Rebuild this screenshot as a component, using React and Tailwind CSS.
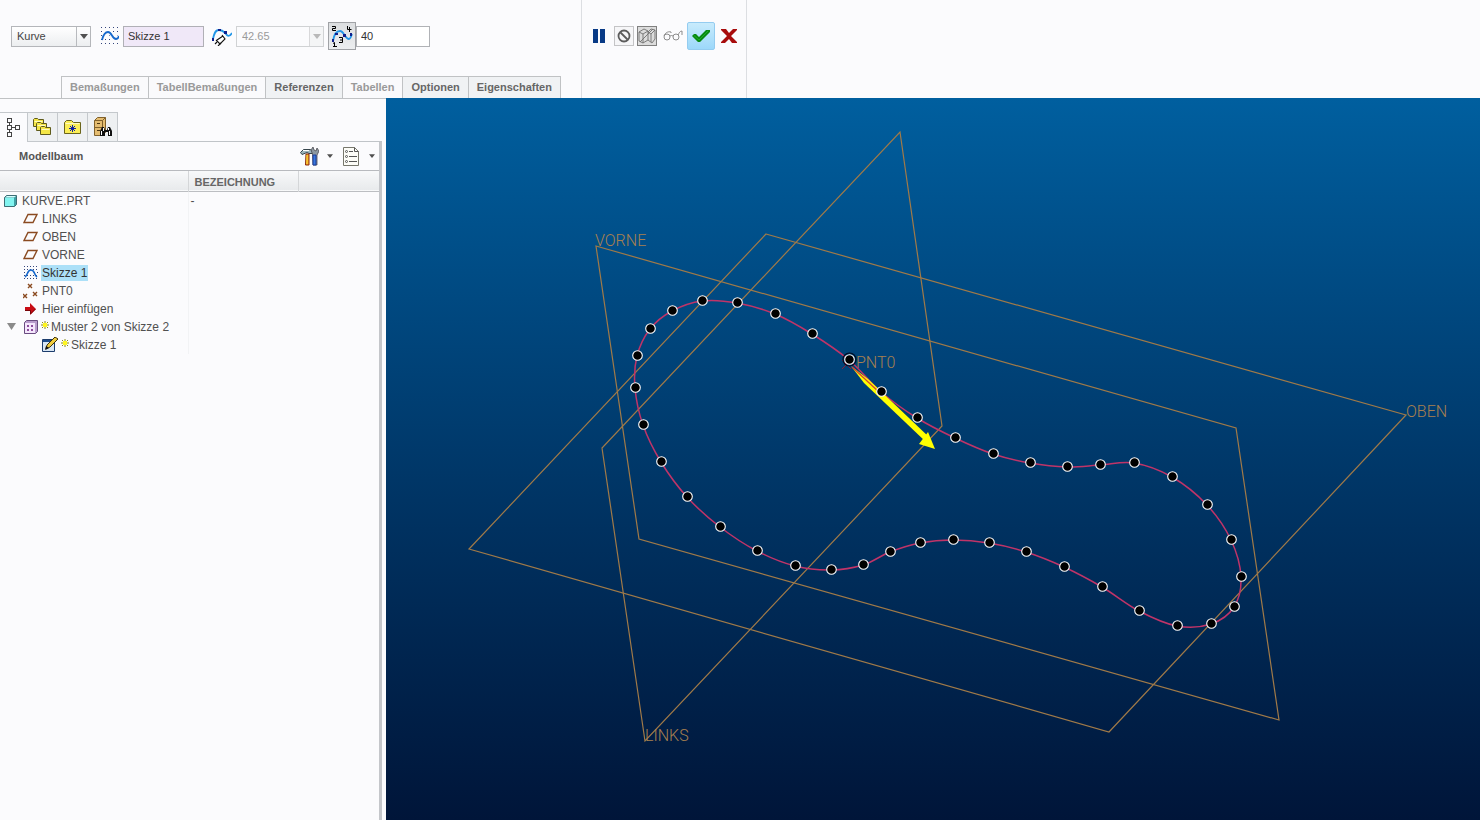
import { useState } from "react";
import clsx from "clsx";

const TABS = [
  { label: "Bemaßungen", disabled: true },
  { label: "TabellBemaßungen", disabled: true },
  { label: "Referenzen" },
  { label: "Tabellen", disabled: true },
  { label: "Optionen" },
  { label: "Eigenschaften" },
];

const POINTS = [
  [849, 359], [881, 391], [917, 417], [955, 437], [993, 453], [1030, 462], [1067, 466], [1100, 464],
  [1134, 462], [1172, 476], [1207, 504], [1231, 539], [1241, 576], [1234, 606], [1211, 623], [1177, 625],
  [1139, 610], [1102, 586], [1064, 566], [1026, 551], [989, 542], [953, 539], [920, 542], [890, 551],
  [863, 564], [831, 569], [795, 565], [757, 550], [720, 526], [687, 496], [661, 461], [643, 424],
  [635, 387], [637, 355], [650, 328], [672, 310], [702, 300], [737, 302], [775, 313], [812, 333],
];

const PLANES = [
  "900,132 942,426 645,741 602,448",
  "596,246 1236,428 1279,720 639,539",
  "766,234 1406,415 1109,732 469,549",
];

// closed Catmull-Rom spline through all points
function closedCurve(pts) {
  const n = pts.length;
  let d = `M${pts[0][0]} ${pts[0][1]}`;
  for (let i = 0; i < n; i++) {
    const p0 = pts[(i - 1 + n) % n];
    const p1 = pts[i];
    const p2 = pts[(i + 1) % n];
    const p3 = pts[(i + 2) % n];
    d += `C${p1[0] + (p2[0] - p0[0]) / 6} ${p1[1] + (p2[1] - p0[1]) / 6} ${p2[0] - (p3[0] - p1[0]) / 6} ${p2[1] - (p3[1] - p1[1]) / 6} ${p2[0]} ${p2[1]}`;
  }
  return d + "Z";
}

const CURVE = closedCurve(POINTS.map(([x, y]) => [x, y + 1]));

/* ---------- icons ---------- */

function SketchIcon() {
  return (
    <svg viewBox="0 0 18 18" className="size-[18px] shrink-0" fill="none">
      <path
        d="M0 .5h18M0 4.500h18M0 8.500h18M0 12.500h18M0 16.500h18"
        stroke="#34457c"
        strokeDasharray="1 3"
        shapeRendering="crispEdges"
      />
      <path d="M2 12C3 8 5 5 7 5c4 0 4 7 8 7q2 0 3-3" stroke="#fbfbfd" strokeWidth="4" />
      <path d="M1 13C2 9 4 5 7 5c4 0 4 7 8 7q2 0 3-3" stroke="#1668cc" strokeWidth="1.8" />
    </svg>
  );
}

function SketchNodeIcon() {
  return (
    <svg viewBox="0 0 14 14" className="size-[14px] shrink-0" fill="none">
      <path
        d="M0 .5h14M0 3.500h14M0 6.500h4M10 6.500h4M0 9.500h14M0 12.500h14"
        stroke="#34457c"
        strokeDasharray="1 2"
        shapeRendering="crispEdges"
      />
      <path d="M1 11C4 9 3 4 7 4s3 5 6 7" stroke="#1668cc" strokeWidth="1.6" />
    </svg>
  );
}

function SpacingIcon() {
  return (
    <svg viewBox="0 0 20 19" className="h-[19px] w-5 shrink-0" fill="none">
      <path d="M1 12C2 7 3 3 7 3c4 0 5 2 7 4 2 3 4 2 6-1" stroke="#2196e8" strokeWidth="1.8" />
      <path d="M0 11h2v3H0zM6 2h3v2H6zM12 4h3v3h-3z" fill="#10208c" />
      <path d="M4 13l4 4 5-5-3-4" fill="#fff" stroke="#111" strokeWidth="1.1" />
      <path d="M3 17l2-2M5 13l6-4M6 19l3-3" stroke="#111" strokeWidth="1.1" />
    </svg>
  );
}

function CountIcon() {
  return (
    <svg viewBox="0 0 22 22" className="size-[22px]" fill="none">
      <path d="M2 16C3 10 5 6 9 6c4 0 5 8 9 8 1 0 2-2 3-5" stroke="#2196e8" strokeWidth="1.8" />
      <path d="M1 14h2v3H1zM4 8h3v2H4zM12 9h3v3h-3zM19 8h2v3h-2z" fill="#10208c" />
      <g stroke="#000">
        <path d="M1 1.500h3.500v2h-3v2H5" />
        <path d="M2 18.500l1.500-1V22M2 21.500h4" />
        <path d="M8 12.500h3.500v5H8M9 15h2.500" />
        <path d="M16.500 1v3.500h4M18.500 2v5" />
      </g>
    </svg>
  );
}

function PauseIcon() {
  return (
    <svg viewBox="0 0 12 14" className="h-[14px] w-3" fill="#083a86">
      <path d="M0 0h5v14H0zM7 0h5v14H7z" />
    </svg>
  );
}

function NoEntryIcon() {
  return (
    <svg viewBox="0 0 14 14" className="size-[14px]" fill="none" stroke="#5c5c5c" strokeWidth="1.8">
      <circle cx="7" cy="7" r="5.500" />
      <path d="M3.500 3.500l7 7" />
    </svg>
  );
}

function PreviewIcon() {
  return (
    <svg viewBox="0 0 18 18" className="size-[18px]" fill="none" stroke="#707070" strokeWidth=".9">
      <path d="M1 5l5-3 4 2v9l-5 3-4-2zM1 5l4 2 5-3M5 7v9" />
      <path d="M10 5l3-3 4 1v9l-3 4-4-3M17 3l-4 4v8M10 5l3 2M2 15L15 2" />
    </svg>
  );
}

function GlassesIcon() {
  return (
    <svg viewBox="0 0 20 12" className="h-3 w-5" fill="none" stroke="#8c8c8c">
      <circle cx="4" cy="7" r="3" />
      <circle cx="13" cy="7" r="3" />
      <path d="M1 6C2 3 5 1 8 2v1M7 6q1.500-1 3 0M15 5c1-2 2-4 4-4v4" />
    </svg>
  );
}

function CheckIcon() {
  return (
    <svg viewBox="0 0 18 14" className="h-[14px] w-[18px]">
      <path d="M0 7l2-2h2l3 3 7-7h4v2L8 13H6z" fill="#078a10" />
      <path d="M2 6.500l5 4.500 9-9" stroke="#1fac28" fill="none" />
    </svg>
  );
}

function CancelIcon() {
  return (
    <svg viewBox="0 0 16 14" className="h-[14px] w-4">
      <path d="M0 0h5l3 4 4-4h4v1l-6 6 6 6v1h-5l-3-4-4 4H0v-1l6-6-6-6z" fill="#a80c0c" />
    </svg>
  );
}

function TreeIcon() {
  return (
    <svg viewBox="0 0 14 20" className="mb-0.5 h-5 w-[14px]" fill="none" stroke="#444" shapeRendering="crispEdges">
      <path d="M1.500 1.500h4v4h-4zM1.500 8.500h4v4h-4zM1.500 15.500h4v4h-4zM9.500 8.500h4v4h-4zM3.500 5.500v3M3.500 12.500v3M5.500 10.500h4" />
    </svg>
  );
}

function FolderShape({ x, y }) {
  return (
    <g transform={`translate(${x} ${y})`}>
      <path d="M.5 1.500l1-1h3l1 1h5v7H.5z" fill="#f4e646" stroke="#5e5a1c" />
      <path d="M1.500 3.500h8" stroke="#fffbc0" />
    </g>
  );
}

function FoldersIcon() {
  return (
    <svg viewBox="0 0 19 20" className="h-5 w-[19px]">
      <FolderShape x={0} y={1} />
      <FolderShape x={3} y={5} />
      <FolderShape x={7} y={9} />
    </svg>
  );
}

function FavoritesIcon() {
  return (
    <svg viewBox="0 0 18 16" className="h-4 w-[18px]">
      <path d="M.5 3.500l2-2h5l2 2h7v11H.5z" fill="#fbee58" stroke="#6a641c" />
      <path d="M1.500 4.500h14" stroke="#fffcc8" />
      <path d="M8.500 6v7M5 9.500h7M6 7l5 5M11 7l-5 5" stroke="#1020a0" />
    </svg>
  );
}

function SearchIcon() {
  return (
    <svg viewBox="0 0 20 20" className="size-5">
      <path d="M1.500 3.500l3-3h8v15l-3 3h-8z" fill="#e4bc70" stroke="#80602a" />
      <path d="M1.500 3.500h8l3-3M9.500 3.500v15M1.500 10.500h8" stroke="#80602a" fill="none" />
      <path d="M4 6.500h3M4 13.500h3" stroke="#4c3510" />
      <path d="M7 19v-5l2-4h2l1 3h2l1-3h2l2 4v5h-4v-4h-3v4z" fill="#111" />
      <path d="M8.500 14v4M10.500 11v3M16.500 14v4M15.500 11v2" stroke="#fff" />
    </svg>
  );
}

function ToolsIcon() {
  return (
    <svg viewBox="0 0 19 20" className="h-5 w-[19px]">
      <path d="M.5 6.500l3-3h7l2 2v2H9l-2-1-5 2z" fill="#9cb4bc" stroke="#36444c" />
      <path d="M3 4.500h6" stroke="#fff" />
      <path d="M6 8h3v11H5.500z" fill="#f0a020" stroke="#8c2c10" />
      <path d="M7 9v9" stroke="#ffe440" />
      <path d="M12.500 8L11 4l2-3 1 3 2 1 1-3 2 3-2 4v10h-4z" fill="#8c98a0" stroke="#4a4a50" strokeWidth=".8" />
      <path d="M13 9h3v10h-3z" fill="#3878e0" stroke="#1c3c98" />
    </svg>
  );
}

function ListIcon() {
  return (
    <svg viewBox="0 0 16 19" className="h-[19px] w-4" fill="none" stroke="#555">
      <path d="M.5.5h11l4 4v14H.5z" fill="#fdfdf8" stroke="#77776c" />
      <path d="M11.500.5v4h4" />
      <circle cx="3.500" cy="4.500" r="1" />
      <circle cx="3.500" cy="9.500" r="1" />
      <circle cx="3.500" cy="14.500" r="1" />
      <path d="M6 4.500h4M6 9.500h8M6 14.500h8" />
    </svg>
  );
}

function Caret({ small }) {
  return (
    <svg viewBox="0 0 8 5" className={small ? "h-1 w-1.5" : "h-[5px] w-2"} fill="currentColor">
      <path d="M0 0h8L4 5z" />
    </svg>
  );
}

function PartIcon() {
  return (
    <svg viewBox="0 0 14 14" className="size-[14px] shrink-0">
      <path d="M.5 3.500l2-2h10v9l-2 2H.5z" fill="#3fa0a4" stroke="#3d6d74" />
      <path d="M1 4h9v8H1z" fill="#82f4f0" />
      <path d="M1 3.500l2-1.500h9l-2 1.500z" fill="#d4ffff" />
    </svg>
  );
}

function PlaneIcon() {
  return (
    <svg viewBox="0 0 15 11" className="h-[11px] w-[15px] shrink-0" fill="none" stroke="#8a4a20" strokeWidth="1.4">
      <path d="M5 1.500h9l-4 8H1z" />
    </svg>
  );
}

function PointsIcon() {
  return (
    <svg viewBox="0 0 15 16" className="h-4 w-[15px] shrink-0" stroke="#8a4a20" strokeWidth="1.4">
      <path d="M5 1l4 4M9 1L5 5M0 11l4 4M4 11l-4 4M10 9l4 4M14 9l-4 4" />
    </svg>
  );
}

function InsertIcon() {
  return (
    <svg viewBox="0 0 11 12" className="mx-0.5 h-3 w-[11px] shrink-0">
      <path d="M0 4h5V0l6 6-6 6V8H0z" fill="#c80c14" />
      <path d="M0 7.500h5.500V11l5-5" stroke="#780408" fill="none" />
    </svg>
  );
}

function PatternIcon() {
  return (
    <svg viewBox="0 0 14 14" className="size-[14px] shrink-0">
      <path d="M.5 2.500l2-2h11v11l-2 2H.5z" fill="#b89ccc" stroke="#694c80" />
      <path d="M1 3h10v10H1z" fill="#f4e6fc" />
      <path d="M3 5h2v2H3zM7 5h2v2H7zM3 9h2v2H3zM7 9h2v2H7z" fill="#8c4c9c" />
    </svg>
  );
}

function EditSketchIcon() {
  return (
    <svg viewBox="0 0 16 15" className="h-[15px] w-4 shrink-0">
      <path d="M.5 2.500h12v12H.5z" fill="#d8e6f4" stroke="#1c3c6c" />
      <path d="M1 3h11v2H1z" fill="#1c4c8c" />
      <path d="M4 12l1-4 8-8 3 2-8 8z" fill="#f0cc3c" stroke="#3c300c" />
      <path d="M3 13l1-4 3 2z" fill="#111" />
    </svg>
  );
}

function NewMark() {
  return (
    <svg viewBox="0 0 8 8" className="mb-1 size-2 shrink-0">
      <path d="M4 0v8M0 4h8M1 1l6 6M7 1L1 7" stroke="#8c8c14" />
      <path d="M2 2h4v4H2z" fill="#fff620" />
    </svg>
  );
}

/* ---------- toolbar ---------- */

function Combo({ label, value, disabled, className }) {
  return (
    <div className={clsx("relative flex", className)}>
      <select
        aria-label={label}
        disabled={disabled}
        defaultValue={value}
        className={clsx(
          "h-[21px] w-full appearance-none border pl-[5px] text-[11px] leading-4 outline-none",
          disabled
            ? "border-[#d0d2d4] bg-[#fbfbfd] text-[#9a9a9a] opacity-100"
            : "border-[#b4b6ba] bg-linear-to-b from-white to-[#eceef0] text-[#444]"
        )}
      >
        <option>{value}</option>
      </select>
      <span
        className={clsx(
          "pointer-events-none absolute inset-y-px right-px flex w-[14px] items-center justify-center border-l",
          disabled ? "border-[#d8d8da] bg-[#f4f5f6] text-[#b8b8b8]" : "border-[#b8babe] text-[#505050]"
        )}
      >
        <Caret />
      </span>
    </div>
  );
}

function Toolbar() {
  const [count, setCount] = useState("40");

  return (
    <header className="flex h-[98px] shrink-0">
      <div className="flex w-[581px] flex-col justify-between">
        <div className="flex items-center pt-[22px] pl-[11px]">
          <Combo label="Typ" value="Kurve" className="w-20" />
          <span className="ml-[10px]">
            <SketchIcon />
          </span>
          <input
            aria-label="Skizze"
            defaultValue="Skizze 1"
            className="ml-1 h-[21px] w-[81px] border border-[#b0b0b6] bg-[#f0e8f8] px-1 text-[11px] text-[#333] outline-none"
          />
          <span className="ml-2">
            <SpacingIcon />
          </span>
          <Combo label="Abstand" value="42.65" disabled className="ml-1 w-[88px]" />
          <button
            type="button"
            aria-label="Anzahl verwenden"
            className="ml-1 flex size-7 items-center justify-center border border-[#a0a2a6] bg-linear-to-b from-[#dcdee0] to-[#eceef0]"
          >
            <CountIcon />
          </button>
          <input
            aria-label="Anzahl"
            value={count}
            onChange={(e) => setCount(e.target.value)}
            className="h-[21px] w-[74px] border border-[#b0b2b6] bg-white px-1 text-[11px] text-[#333] outline-none"
          />
        </div>

        <nav className="flex pl-[61px]">
          {TABS.map((tab) => (
            <button
              key={tab.label}
              type="button"
              disabled={tab.disabled}
              className={clsx(
                "h-[22px] border-t border-l border-[#c0c2c4] px-2 text-[11px] font-bold last:border-r",
                tab.disabled ? "bg-[#fafafc] text-[#999]" : "bg-[#f0f2f4] text-[#666]"
              )}
            >
              {tab.label}
            </button>
          ))}
        </nav>
      </div>

      <div className="flex w-[166px] items-start border-x border-[#dcdee2] pt-[22px] pl-[11px]">
        <div className="flex h-7 items-center">
          <button type="button" aria-label="Pause">
            <PauseIcon />
          </button>
          <button
            type="button"
            aria-label="Keine Vorschau"
            className="ml-[9px] flex size-5 items-center justify-center border border-[#c4c4c6] bg-[#f6f6f8]"
          >
            <NoEntryIcon />
          </button>
          <button
            type="button"
            aria-label="Vorschau"
            className="ml-[3px] flex size-5 items-center justify-center border border-[#808080] bg-[#dcdcdc]"
          >
            <PreviewIcon />
          </button>
          <button type="button" aria-label="Anzeigen" className="ml-[6px]">
            <GlassesIcon />
          </button>
          <button
            type="button"
            aria-label="OK"
            className="ml-1 flex size-7 items-center justify-center rounded-[2px] border border-[#94ccf0] bg-linear-to-b from-[#c8ebfc] to-[#9cd8fa]"
          >
            <CheckIcon />
          </button>
          <button type="button" aria-label="Abbrechen" className="ml-[6px]">
            <CancelIcon />
          </button>
        </div>
      </div>
    </header>
  );
}

/* ---------- model tree ---------- */

const ROWS = [
  { label: "KURVE.PRT", icon: <PartIcon />, pad: "pl-1", note: "-" },
  { label: "LINKS", icon: <PlaneIcon />, pad: "pl-[23px]" },
  { label: "OBEN", icon: <PlaneIcon />, pad: "pl-[23px]" },
  { label: "VORNE", icon: <PlaneIcon />, pad: "pl-[23px]" },
  { label: "Skizze 1", icon: <SketchNodeIcon />, pad: "pl-6", selected: true },
  { label: "PNT0", icon: <PointsIcon />, pad: "pl-[23px]" },
  { label: "Hier einfügen", icon: <InsertIcon />, pad: "pl-[23px]" },
  { label: "Muster 2 von Skizze 2", icon: <PatternIcon />, pad: "pl-[7px]", open: true, isNew: true },
  { label: "Skizze 1", icon: <EditSketchIcon />, pad: "pl-[42px]", isNew: true },
];

const SIDE_TABS = [
  { label: "Modellbaum", icon: <TreeIcon /> },
  { label: "Ordner", icon: <FoldersIcon /> },
  { label: "Favoriten", icon: <FavoritesIcon /> },
  { label: "Suchen", icon: <SearchIcon /> },
];

function ModelTree() {
  return (
    <table className="w-full table-fixed border-collapse text-left">
      <thead>
        <tr className="h-5 border-b border-[#bcbec2] bg-linear-to-b from-[#f8f9fa] to-[#e8eaec] text-[11px] leading-4 text-[#666]">
          <th className="w-[188px] border-r border-[#d4d6d8] p-0" />
          <th className="w-[110px] border-r border-[#d4d6d8] p-0 pt-0.5 pl-1.5 font-bold">BEZEICHNUNG</th>
          <th className="p-0" />
        </tr>
      </thead>
      <tbody className="text-xs text-[#505050]">
        {ROWS.map((row, i) => (
          <tr key={i} className="h-[18px]">
            <td className="border-r border-[#f2f3f5] p-0">
              <div className={clsx("flex h-[18px] items-center whitespace-nowrap", row.pad)}>
                {row.open && (
                  <button type="button" aria-label="Zuklappen" className="mr-2 text-[#8a8a8a]">
                    <svg viewBox="0 0 9 7" className="h-[7px] w-[9px]" fill="currentColor">
                      <path d="M0 0h9L4.500 7z" />
                    </svg>
                  </button>
                )}
                {row.icon}
                {row.isNew ? (
                  <span className="ml-[3px] flex items-center gap-0.5">
                    <NewMark />
                    {row.label}
                  </span>
                ) : (
                  <span className={clsx("ml-[3px] h-4 px-px leading-4", row.selected && "bg-[#ace0f8] text-[#333]")}>
                    {row.label}
                  </span>
                )}
              </div>
            </td>
            <td className="p-0 pl-0.5">{row.note}</td>
            <td className="p-0" />
          </tr>
        ))}
      </tbody>
    </table>
  );
}

function Sidebar() {
  const [active, setActive] = useState("Modellbaum");

  return (
    <aside className="flex w-[386px] shrink-0 flex-col border-t border-[#c0c2c4] pr-1">
      <div className="flex pt-[13px]">
        {SIDE_TABS.map((tab) => (
          <button
            key={tab.label}
            type="button"
            aria-label={tab.label}
            onClick={() => setActive(tab.label)}
            className={clsx(
              "flex h-[30px] items-center justify-center border-t border-r border-[#c4c8cc]",
              active === tab.label ? "w-7 pr-0.5" : "w-[30px] border-b bg-[#eef0f2]"
            )}
          >
            {tab.icon}
          </button>
        ))}
        <div className="flex-1 border-b border-[#c0c4c8]" />
      </div>

      <div className="flex-1 border-r-[3px] border-[#c4c6ca]">
        <div className="flex h-[29px] items-center border-b border-[#b8babe] pr-1 pl-[19px]">
          <h2 className="flex-1 text-[11px] font-bold text-[#555]">Modellbaum</h2>
          <button type="button" aria-label="Einstellungen" className="flex items-center gap-2 text-[#505050]">
            <ToolsIcon />
            <Caret small />
          </button>
          <button type="button" aria-label="Anzeigen" className="ml-[10px] flex items-center gap-[10px] text-[#505050]">
            <ListIcon />
            <Caret small />
          </button>
        </div>
        <ModelTree />
      </div>
    </aside>
  );
}

/* ---------- 3D view ---------- */

function Viewport() {
  return (
    <main className="min-w-0 flex-1 bg-linear-to-b from-[#005f9f] to-[#001539]">
      <svg viewBox="386 98 1094 722" className="block w-full" fill="none">
        <g stroke="#a07a48" strokeWidth="1.2">
          {PLANES.map((p) => (
            <polygon key={p} points={p} />
          ))}
        </g>
        <g fill="#a88050" fontSize="16" fontWeight="300" fontFamily="Roboto, 'Liberation Sans', sans-serif">
          <text x="595" y="246">VORNE</text>
          <text x="856" y="368">PNT0</text>
          <text x="1406" y="417">OBEN</text>
          <text x="645" y="741">LINKS</text>
        </g>
        <path d="M842 360l9 9M851 360l-9 9" stroke="#8c1c3c" />
        <path d={CURVE} stroke="#c03468" strokeWidth="1.5" />
        <path d="M851 366L868 379L930 438L926 442L864 383Z" fill="#ffff00" />
        <path d="M935 449L919 444L928 432Z" fill="#ffff00" />
        <path d="M852 367L880 393" stroke="#d84030" strokeWidth="1.2" />
        <circle cx="849.500" cy="359.500" r="6.500" stroke="#000c20" strokeWidth="1.2" />
        <g fill="#000" stroke="#fff" strokeWidth="1.1">
          {POINTS.map(([x, y]) => (
            <circle key={`${x}-${y}`} cx={x + 0.5} cy={y + 0.5} r="4.800" />
          ))}
        </g>
      </svg>
    </main>
  );
}

export default function App() {
  return (
    <div className="flex min-h-screen flex-col bg-[#fbfbfd] font-['Liberation_Sans',Arial,sans-serif]">
      <Toolbar />
      <div className="flex flex-1">
        <Sidebar />
        <Viewport />
      </div>
    </div>
  );
}
